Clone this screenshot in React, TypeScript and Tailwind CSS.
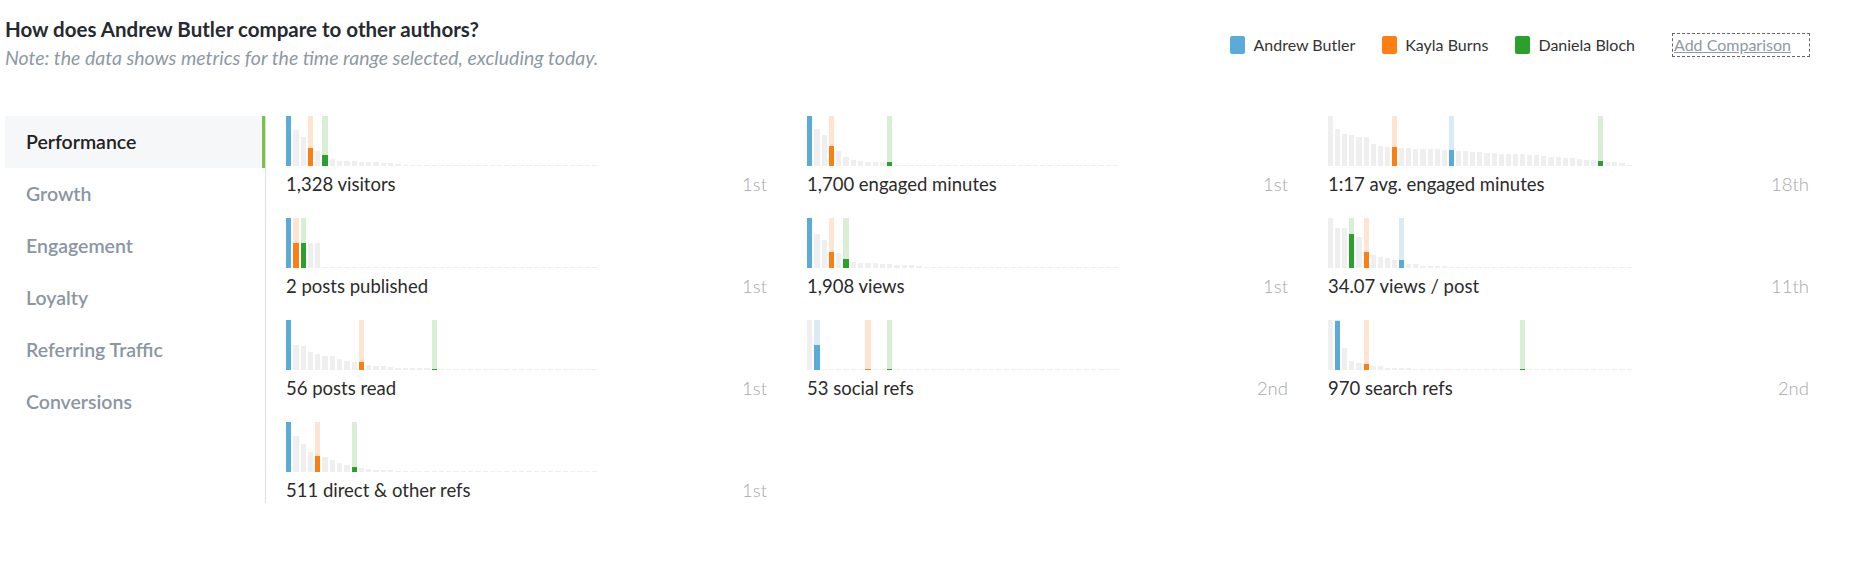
import React from 'react'

type Hue = 'blue' | 'orange' | 'green'

interface Metric {
  label: string
  rank: string
  bars: number[]
  marks: Record<number, Hue>
}

const BAR_COUNT = 43

const solid: Record<Hue, string> = {
  blue: 'bg-[#5aabd7]',
  orange: 'bg-[#fd7f13]',
  green: 'bg-[#2ca02c]',
}

const tint: Record<Hue, string> = {
  blue: 'bg-[#dbebf6]',
  orange: 'bg-[#fee4d1]',
  green: 'bg-[#d8efd6]',
}

const metrics: Metric[] = [
  {
    label: '1,328 visitors',
    rank: '1st',
    bars: [50, 36, 29, 18, 15, 11, 7, 5, 5, 5, 4, 4, 4, 3, 3, 2],
    marks: { 0: 'blue', 3: 'orange', 5: 'green' },
  },
  {
    label: '1,700 engaged minutes',
    rank: '1st',
    bars: [50, 37, 31, 20, 15, 9, 6, 5, 4, 4, 4, 4],
    marks: { 0: 'blue', 3: 'orange', 11: 'green' },
  },
  {
    label: '1:17 avg. engaged minutes',
    rank: '18th',
    bars: [
      50, 37, 32, 31, 29, 29, 22, 20, 19, 19, 18, 18, 17, 17, 17, 17, 16, 16, 15, 14.7, 14, 14, 13.3,
      13, 12.3, 12.3, 11.7, 11.7, 10.7, 10.7, 9.7, 9, 9, 8.3, 8.3, 7.3, 6.3, 5.7, 4.7, 4, 4, 3.3, 1,
    ],
    marks: { 9: 'orange', 17: 'blue', 38: 'green' },
  },
  {
    label: '2 posts published',
    rank: '1st',
    bars: [50, 25, 25, 25, 25],
    marks: { 0: 'blue', 1: 'orange', 2: 'green' },
  },
  {
    label: '1,908 views',
    rank: '1st',
    bars: [50, 34, 28, 16, 15, 9, 6, 5, 5, 5, 4, 4, 3, 3, 3, 2],
    marks: { 0: 'blue', 3: 'orange', 5: 'green' },
  },
  {
    label: '34.07 views / post',
    rank: '11th',
    bars: [50, 40, 40, 34, 31, 16, 13, 11, 10, 8, 8, 4, 4, 2, 2, 2, 2],
    marks: { 3: 'green', 5: 'orange', 10: 'blue' },
  },
  {
    label: '56 posts read',
    rank: '1st',
    bars: [50, 25, 24, 18, 16, 14, 14, 11, 9, 8, 8, 5, 4, 4, 3, 2, 2, 2, 2, 2, 1],
    marks: { 0: 'blue', 10: 'orange', 20: 'green' },
  },
  {
    label: '53 social refs',
    rank: '2nd',
    bars: [50, 25],
    marks: { 1: 'blue', 8: 'orange', 11: 'green' },
  },
  {
    label: '970 search refs',
    rank: '2nd',
    bars: [50, 49, 22, 9, 7, 6, 4, 4, 2, 2, 2, 2],
    marks: { 1: 'blue', 5: 'orange', 27: 'green' },
  },
  {
    label: '511 direct & other refs',
    rank: '1st',
    bars: [50, 36, 28, 20, 16, 15, 12, 9, 7, 5, 4, 3, 2, 2, 2],
    marks: { 0: 'blue', 4: 'orange', 9: 'green' },
  },
]

const tabs = ['Performance', 'Growth', 'Engagement', 'Loyalty', 'Referring Traffic', 'Conversions']

const authors: { name: string; hue: Hue }[] = [
  { name: 'Andrew Butler', hue: 'blue' },
  { name: 'Kayla Burns', hue: 'orange' },
  { name: 'Daniela Bloch', hue: 'green' },
]

function Sparkbars({ bars, marks, narrow }: { bars: number[]; marks: Record<number, Hue>; narrow?: boolean }) {
  const values = Array.from({ length: BAR_COUNT }, (_, i) => bars[i] ?? 1)
  return (
    <div className={`flex h-[50px] items-end gap-[2px] ${narrow ? 'w-[304px]' : 'w-[311px]'}`}>
      {values.map((v, i) => {
        const hue = marks[i]
        if (!hue) {
          return <div key={i} className="flex-1 bg-[#efefef]" style={{ height: `${Math.max(v, 1)}px` }} />
        }
        return (
          <div key={i} className={`flex h-full flex-1 flex-col justify-end ${tint[hue]}`}>
            <div className={solid[hue]} style={{ height: `${Math.max(v, 1.5)}px` }} />
          </div>
        )
      })}
    </div>
  )
}

export default function App() {
  return (
    <div className="min-h-[567px] bg-white font-['Lato',sans-serif] text-[#2b2b2b]">
      <div className="flex items-start justify-between pl-[5px] pr-[39px] pt-[16px]">
        <div>
          <h2 className="text-[20.5px] font-bold leading-[26px] text-[#262a30]">
            How does Andrew Butler compare to other authors?
          </h2>
          <p className="mt-[3px] text-[19.5px] italic leading-[26px] text-[#8e99a5]">
            Note: the data shows metrics for the time range selected, excluding today.
          </p>
        </div>
        <div className="mt-[17px] flex items-center text-[16px] text-[#333]">
          {authors.map((a) => (
            <div key={a.name} className="mr-[27px] flex items-center gap-[8px]">
              <span className={`h-[18px] w-[15px] rounded-[2px] ${solid[a.hue]}`} />
              <span>{a.name}</span>
            </div>
          ))}
          <button className="ml-[10px] w-[138px] border border-dashed border-[#666] pl-[1px] text-left text-[16px] leading-[22px] text-[#8e99a5] underline">
            Add Comparison
          </button>
        </div>
      </div>

      <div className="mt-[45px] flex pl-[5px]">
        <nav className="w-[261px] shrink-0 self-start border-r border-[#dddddd]">
          {tabs.map((t, i) => (
            <div
              key={t}
              className={
                i === 0
                  ? 'flex h-[52px] items-center border-r-[3px] border-[#7cc242] bg-[#f6f7f8] pl-[21px] text-[19.5px] font-semibold text-[#222]'
                  : 'flex h-[52px] items-center pl-[21px] text-[19.5px] font-semibold text-[#8a96a2]'
              }
            >
              {t}
            </div>
          ))}
          <div className="h-[75px]" />
        </nav>

        <div className="grid grid-cols-[481px_481px_481px] gap-x-[40px] gap-y-[21px] pl-[20px]">
          {metrics.map((m, i) => (
            <div key={m.label}>
              <Sparkbars bars={m.bars} marks={m.marks} narrow={i % 3 === 2} />
              <div className="mt-[7px] flex h-[24px] items-center justify-between text-[18.5px]">
                <span className="text-[#2b2b2b]">{m.label}</span>
                <span className="font-light text-[#a8a8a8]">{m.rank}</span>
              </div>
            </div>
          ))}
        </div>
      </div>
    </div>
  )
}
